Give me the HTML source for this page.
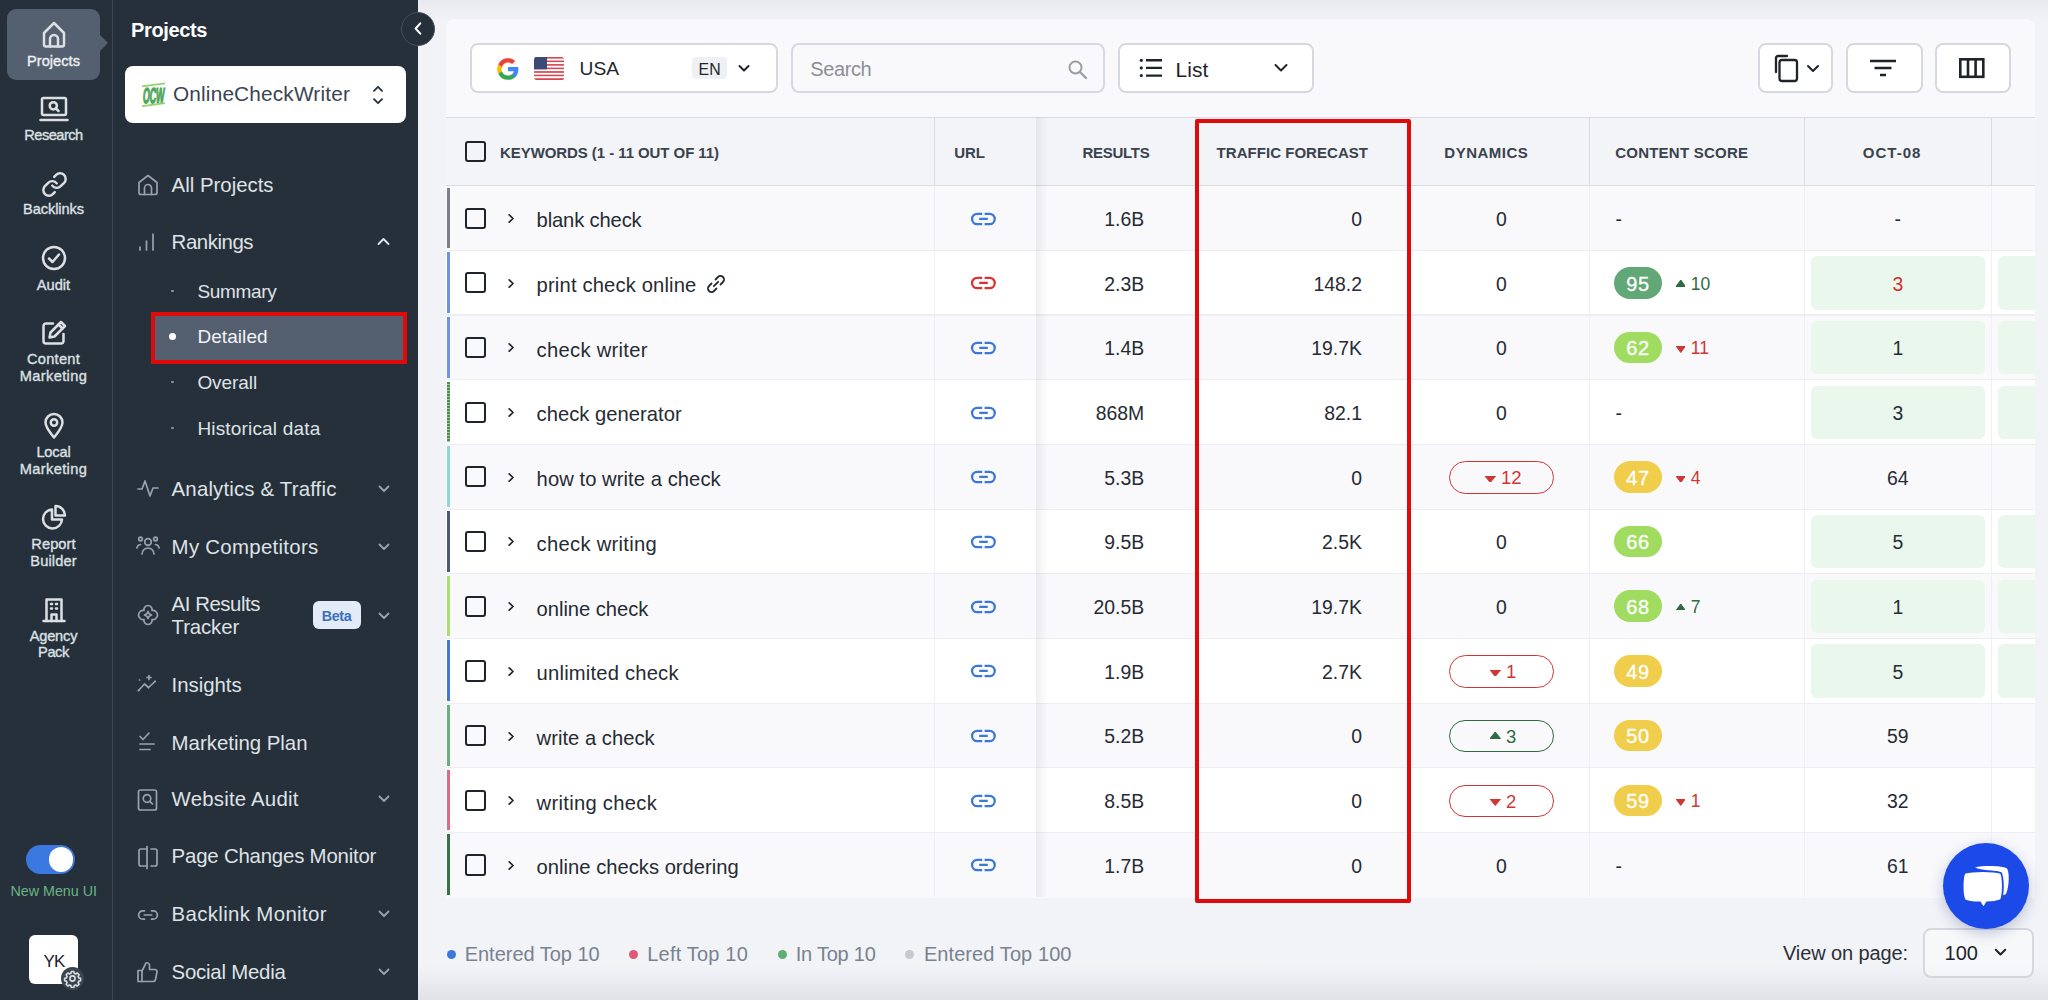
<!DOCTYPE html>
<html><head><meta charset="utf-8"><title>Rankings Detailed</title>
<style>
html,body{margin:0;padding:0;width:2048px;height:1000px;overflow:hidden;background:#f1f2f5;}
body{position:relative;font-family:"Liberation Sans",sans-serif;}
.a{position:absolute;display:block;}
.t{position:absolute;white-space:nowrap;line-height:1;}
</style></head><body>
<div class="a" style="left:418px;top:0px;width:1630px;height:1000px;background:#f2f3f7;"></div>
<div class="a" style="left:418px;top:0px;width:1630px;height:22px;background:linear-gradient(180deg,#e9eaef,rgba(242,243,247,0));"></div>
<div class="a" style="left:446px;top:18.5px;width:1589px;height:877.5px;background:#f9f9fc;border-radius:9px 9px 0 0;"></div>
<div class="a" style="left:470.3px;top:43px;width:307.3px;height:50px;background:#fff;border:2.5px solid #d6d8df;border-radius:8px;box-sizing:border-box;"></div>
<svg class="a" style="left:495.3px;top:55.5px;" width="26" height="26" viewBox="0 0 24 24" fill="none"><path d="M21.6 12.2c0-.7-.1-1.4-.2-2H12v3.9h5.4a4.6 4.6 0 0 1-2 3v2.5h3.2c1.9-1.7 3-4.3 3-7.4z" fill="#4285F4"/><path d="M12 22c2.7 0 5-.9 6.6-2.4l-3.2-2.5c-.9.6-2 1-3.4 1-2.6 0-4.8-1.8-5.6-4.1H3.1v2.6A10 10 0 0 0 12 22z" fill="#34A853"/><path d="M6.4 14a6 6 0 0 1 0-3.9V7.5H3.1a10 10 0 0 0 0 9z" fill="#FBBC05"/><path d="M12 5.9c1.5 0 2.8.5 3.8 1.5l2.9-2.9A10 10 0 0 0 3.1 7.5l3.3 2.6C7.2 7.7 9.4 5.9 12 5.9z" fill="#EA4335"/></svg>
<svg class="a" style="left:534px;top:56.6px;" width="30.3" height="23.2" viewBox="0 0 30.3 23.2" fill="none"><clipPath id="fc"><rect width="30.3" height="23.2" rx="3"/></clipPath><g clip-path="url(#fc)"><rect x="0" y="0.00" width="30" height="1.77" fill="#d8444f"/><rect x="0" y="1.77" width="30" height="1.77" fill="#ffffff"/><rect x="0" y="3.54" width="30" height="1.77" fill="#d8444f"/><rect x="0" y="5.31" width="30" height="1.77" fill="#ffffff"/><rect x="0" y="7.08" width="30" height="1.77" fill="#d8444f"/><rect x="0" y="8.85" width="30" height="1.77" fill="#ffffff"/><rect x="0" y="10.62" width="30" height="1.77" fill="#d8444f"/><rect x="0" y="12.38" width="30" height="1.77" fill="#ffffff"/><rect x="0" y="14.15" width="30" height="1.77" fill="#d8444f"/><rect x="0" y="15.92" width="30" height="1.77" fill="#ffffff"/><rect x="0" y="17.69" width="30" height="1.77" fill="#d8444f"/><rect x="0" y="19.46" width="30" height="1.77" fill="#ffffff"/><rect x="0" y="21.23" width="30" height="1.77" fill="#d8444f"/><rect x="0" y="0" width="13" height="12.4" fill="#3c4a78"/></g></svg>
<div class="t" style="left:579.60px;top:59.45px;font-size:19.2px;color:#1f242b;letter-spacing:-0.027px;">USA</div>
<div class="a" style="left:692.2px;top:57px;width:34.8px;height:22.3px;background:#eff0f4;border-radius:4px;"></div>
<div class="t" style="left:698.60px;top:62.13px;font-size:15.8px;color:#1f242b;letter-spacing:0.025px;">EN</div>
<svg class="a" style="left:736px;top:63px;" width="16" height="11" viewBox="0 0 16 11" fill="none"><path d="M3.5 3 L8 7.5 L12.5 3" stroke="#1f242b" stroke-width="2" stroke-linecap="round" stroke-linejoin="round"/></svg>
<div class="a" style="left:790.7px;top:43px;width:314.8px;height:50px;background:#f9f9fc;border:2.5px solid #d6d8df;border-radius:8px;box-sizing:border-box;"></div>
<div class="t" style="left:810.30px;top:59.47px;font-size:20px;color:#8b8f96;letter-spacing:-0.395px;">Search</div>
<svg class="a" style="left:1066px;top:58px;" width="24" height="24" viewBox="0 0 24 24" fill="none"><circle cx="9.5" cy="9.5" r="6" stroke="#9a9ea5" stroke-width="2"/><path d="M14 14 L20 20" stroke="#9a9ea5" stroke-width="2.4" stroke-linecap="round"/></svg>
<div class="a" style="left:1117.8px;top:43px;width:196.6px;height:50px;background:#fff;border:2.5px solid #d6d8df;border-radius:8px;box-sizing:border-box;"></div>
<svg class="a" style="left:1138px;top:57px;" width="27" height="22" viewBox="0 0 27 22" fill="none"><circle cx="3.3" cy="3.3" r="1.6" fill="#1f242b"/><circle cx="3.3" cy="10.9" r="1.6" fill="#1f242b"/><circle cx="3.3" cy="18.6" r="1.6" fill="#1f242b"/><path d="M8 3.3 H24 M8 10.9 H24 M8 18.6 H24" stroke="#1f242b" stroke-width="2.4"/></svg>
<div class="t" style="left:1175.50px;top:58.62px;font-size:21px;color:#1f242b;letter-spacing:0.080px;">List</div>
<svg class="a" style="left:1273px;top:63px;" width="16" height="11" viewBox="0 0 16 11" fill="none"><path d="M2.5 2 L8 7.5 L13.5 2" stroke="#1f242b" stroke-width="2" stroke-linecap="round" stroke-linejoin="round"/></svg>
<div class="a" style="left:1758.3px;top:42.8px;width:75.2px;height:50.4px;background:#fff;border:2.5px solid #d6d8df;border-radius:8px;box-sizing:border-box;"></div>
<div class="a" style="left:1846px;top:42.8px;width:76.7px;height:50.4px;background:#fff;border:2.5px solid #d6d8df;border-radius:8px;box-sizing:border-box;"></div>
<div class="a" style="left:1935px;top:42.8px;width:76.4px;height:50.4px;background:#fff;border:2.5px solid #d6d8df;border-radius:8px;box-sizing:border-box;"></div>
<svg class="a" style="left:1772px;top:53px;" width="50" height="32" viewBox="0 0 50 32" fill="none"><path d="M4 19 V5 a2 2 0 0 1 2 -2 H15" stroke="#1f242b" stroke-width="2.3" stroke-linecap="round"/><rect x="7.5" y="7" width="17.5" height="21" rx="2.5" stroke="#1f242b" stroke-width="2.3"/><path d="M36 13 L41 18 L46 13" stroke="#1f242b" stroke-width="2" stroke-linecap="round" stroke-linejoin="round"/></svg>
<svg class="a" style="left:1868px;top:56px;" width="30" height="24" viewBox="0 0 30 24" fill="none"><path d="M2 5 H28 M6.5 12 H23.5 M12 19 H18" stroke="#1f242b" stroke-width="2.6"/></svg>
<svg class="a" style="left:1957px;top:56px;" width="30" height="24" viewBox="0 0 30 24" fill="none"><rect x="3.3" y="3.3" width="23" height="17.5" stroke="#1f242b" stroke-width="2.6"/><path d="M11 3.3 V20.8 M18.6 3.3 V20.8" stroke="#1f242b" stroke-width="2.6"/></svg>
<div class="a" style="left:446px;top:117px;width:1589px;height:69px;background:#f3f4f8;border-top:1px solid #d9dbe2;border-bottom:1.5px solid #d9dbe2;box-sizing:border-box;"></div>
<div class="a" style="left:934.2px;top:118px;width:1px;height:67px;background:#d9dbe2;"></div>
<div class="a" style="left:1804.4px;top:118px;width:1px;height:67px;background:#d9dbe2;"></div>
<div class="a" style="left:1991.2px;top:118px;width:1px;height:67px;background:#d9dbe2;"></div>
<div class="a" style="left:1589.2px;top:118px;width:1px;height:67px;background:#d9dbe2;"></div>
<div class="a" style="left:464.8px;top:141px;width:21.2px;height:21.2px;border:2.6px solid #1f242b;border-radius:3px;box-sizing:border-box;"></div>
<div class="t" style="left:500.00px;top:145.30px;font-size:15px;color:#39424d;font-weight:700;letter-spacing:-0.070px;">KEYWORDS (1 - 11 OUT OF 11)</div>
<div class="t" style="left:954.20px;top:145.30px;font-size:15px;color:#39424d;font-weight:700;letter-spacing:-0.110px;">URL</div>
<div class="t" style="left:1082.40px;top:145.30px;font-size:15px;color:#39424d;font-weight:700;letter-spacing:-0.271px;">RESULTS</div>
<div class="t" style="left:1216.60px;top:145.30px;font-size:15px;color:#39424d;font-weight:700;letter-spacing:0.036px;">TRAFFIC FORECAST</div>
<div class="t" style="left:1444.30px;top:145.30px;font-size:15px;color:#39424d;font-weight:700;letter-spacing:0.499px;">DYNAMICS</div>
<div class="t" style="left:1615.20px;top:145.30px;font-size:15px;color:#39424d;font-weight:700;letter-spacing:0.230px;">CONTENT SCORE</div>
<div class="t" style="left:1862.70px;top:145.30px;font-size:15px;color:#39424d;font-weight:700;letter-spacing:1.047px;">OCT-08</div>
<div class="a" style="left:446px;top:185.5px;width:1589px;height:65.19px;background:#f9f9fc;"></div>
<div class="a" style="left:446.5px;top:187.5px;width:3px;height:60.69px;background:#7c8087;"></div>
<div class="a" style="left:464.8px;top:207.5px;width:21.2px;height:21.2px;border:2.6px solid #1f242b;border-radius:3px;box-sizing:border-box;"></div>
<svg class="a" style="left:506px;top:213.0px;" width="10" height="11" viewBox="0 0 10 11" fill="none"><path d="M3.2 1.8 L7 5.5 L3.2 9.2" stroke="#1f242b" stroke-width="1.7" stroke-linecap="round" stroke-linejoin="round"/></svg>
<div class="t" style="left:536.60px;top:210.40px;font-size:20.2px;color:#262b33;letter-spacing:-0.152px;">blank check</div>
<svg class="a" style="left:969.5px;top:211.5px;" width="27" height="14" viewBox="0 0 27 14" fill="none"><path d="M12.2 1.8 H7.2 a5.15 5.15 0 0 0 0 10.3 H12.2 M14.6 1.8 H19.6 a5.15 5.15 0 0 1 0 10.3 H14.6 M9.2 6.95 H17.8" stroke="#3a78d9" stroke-width="2.3" stroke-linecap="butt"/></svg>
<div class="t" style="left:1104.29px;top:209.88px;font-size:19.4px;color:#262b33;">1.6B</div>
<div class="t" style="left:1351.21px;top:209.88px;font-size:19.4px;color:#262b33;">0</div>
<div class="t" style="left:1495.91px;top:209.88px;font-size:19.4px;color:#262b33;">0</div>
<div class="t" style="left:1615.50px;top:209.88px;font-size:19.4px;color:#262b33;">-</div>
<div class="a" style="left:1804.4px;top:185.5px;width:1px;height:64.69px;background:#eef0f4;"></div>
<div class="a" style="left:1991.2px;top:185.5px;width:1px;height:64.69px;background:#eef0f4;"></div>
<div class="a" style="left:934.2px;top:185.5px;width:1px;height:64.69px;background:#eef0f4;"></div>
<div class="a" style="left:1589.2px;top:185.5px;width:1px;height:64.69px;background:#eef0f4;"></div>
<div class="t" style="left:1894.57px;top:209.88px;font-size:19.4px;color:#262b33;">-</div>
<div class="a" style="left:446px;top:250.19px;width:1589px;height:65.19px;background:#ffffff;"></div>
<div class="a" style="left:446.5px;top:252.19px;width:3px;height:60.69px;background:#6b95e0;"></div>
<div class="a" style="left:464.8px;top:272.19px;width:21.2px;height:21.2px;border:2.6px solid #1f242b;border-radius:3px;box-sizing:border-box;"></div>
<svg class="a" style="left:506px;top:277.69px;" width="10" height="11" viewBox="0 0 10 11" fill="none"><path d="M3.2 1.8 L7 5.5 L3.2 9.2" stroke="#1f242b" stroke-width="1.7" stroke-linecap="round" stroke-linejoin="round"/></svg>
<div class="t" style="left:536.60px;top:275.09px;font-size:20.2px;color:#262b33;letter-spacing:0.155px;">print check online</div>
<svg class="a" style="left:705px;top:273.39px;" width="22" height="22" viewBox="0 0 22 22" fill="none"><path d="M8.8 13.2 L13.2 8.8" stroke="#262b33" stroke-width="1.8" stroke-linecap="round"/><path d="M10.5 6.5 L13 4 a3.5 3.5 0 0 1 5 5 L15.5 11.5" stroke="#262b33" stroke-width="1.8" stroke-linecap="round"/><path d="M11.5 15.5 L9 18 a3.5 3.5 0 0 1 -5 -5 L6.5 10.5" stroke="#262b33" stroke-width="1.8" stroke-linecap="round"/></svg>
<svg class="a" style="left:969.5px;top:276.19px;" width="27" height="14" viewBox="0 0 27 14" fill="none"><path d="M12.2 1.8 H7.2 a5.15 5.15 0 0 0 0 10.3 H12.2 M14.6 1.8 H19.6 a5.15 5.15 0 0 1 0 10.3 H14.6 M9.2 6.95 H17.8" stroke="#e03131" stroke-width="2.3" stroke-linecap="butt"/></svg>
<div class="t" style="left:1104.29px;top:274.57px;font-size:19.4px;color:#262b33;">2.3B</div>
<div class="t" style="left:1313.45px;top:274.57px;font-size:19.4px;color:#262b33;">148.2</div>
<div class="t" style="left:1495.91px;top:274.57px;font-size:19.4px;color:#262b33;">0</div>
<div class="a" style="left:1614.2px;top:266.99px;width:47.5px;height:31.6px;background:#62a877;border-radius:16px;"></div>
<div class="t" style="left:1626.25px;top:273.66px;font-size:20px;color:#ffffff;letter-spacing:0.627px;-webkit-text-stroke:0.3px #fff;">95</div>
<svg class="a" style="left:1675.5px;top:280.19px;" width="9.5" height="6.5" viewBox="0 0 9.5 6.5" fill="none"><path d="M0 6.5 L4.75 0 L9.5 6.5 Z" fill="#2f6b40" stroke="#2f6b40" stroke-width="1" stroke-linejoin="round"/></svg>
<div class="t" style="left:1690.80px;top:275.58px;font-size:17.5px;color:#2f6b40;">10</div>
<div class="a" style="left:1804.4px;top:250.19px;width:1px;height:64.69px;background:#eef0f4;"></div>
<div class="a" style="left:1991.2px;top:250.19px;width:1px;height:64.69px;background:#eef0f4;"></div>
<div class="a" style="left:934.2px;top:250.19px;width:1px;height:64.69px;background:#eef0f4;"></div>
<div class="a" style="left:1589.2px;top:250.19px;width:1px;height:64.69px;background:#eef0f4;"></div>
<div class="a" style="left:1811px;top:256.29px;width:173.6px;height:53.3px;background:#e9f7ec;border-radius:6px;"></div>
<div class="a" style="left:1997.7px;top:256.29px;width:37.3px;height:53.3px;background:#e9f7ec;border-radius:6px 0 0 6px;"></div>
<div class="t" style="left:1892.41px;top:274.57px;font-size:19.4px;color:#d42f2f;">3</div>
<div class="a" style="left:446px;top:314.88px;width:1589px;height:65.19px;background:#f9f9fc;"></div>
<div class="a" style="left:446.5px;top:316.88px;width:3px;height:60.69px;background:#6b95e0;"></div>
<div class="a" style="left:464.8px;top:336.88px;width:21.2px;height:21.2px;border:2.6px solid #1f242b;border-radius:3px;box-sizing:border-box;"></div>
<svg class="a" style="left:506px;top:342.38px;" width="10" height="11" viewBox="0 0 10 11" fill="none"><path d="M3.2 1.8 L7 5.5 L3.2 9.2" stroke="#1f242b" stroke-width="1.7" stroke-linecap="round" stroke-linejoin="round"/></svg>
<div class="t" style="left:536.60px;top:339.78px;font-size:20.2px;color:#262b33;letter-spacing:0.287px;">check writer</div>
<svg class="a" style="left:969.5px;top:340.88px;" width="27" height="14" viewBox="0 0 27 14" fill="none"><path d="M12.2 1.8 H7.2 a5.15 5.15 0 0 0 0 10.3 H12.2 M14.6 1.8 H19.6 a5.15 5.15 0 0 1 0 10.3 H14.6 M9.2 6.95 H17.8" stroke="#3a78d9" stroke-width="2.3" stroke-linecap="butt"/></svg>
<div class="t" style="left:1104.29px;top:339.26px;font-size:19.4px;color:#262b33;">1.4B</div>
<div class="t" style="left:1311.30px;top:339.26px;font-size:19.4px;color:#262b33;">19.7K</div>
<div class="t" style="left:1495.91px;top:339.26px;font-size:19.4px;color:#262b33;">0</div>
<div class="a" style="left:1614.2px;top:331.68px;width:47.5px;height:31.6px;background:#9fdc60;border-radius:16px;"></div>
<div class="t" style="left:1626.25px;top:338.35px;font-size:20px;color:#ffffff;letter-spacing:0.627px;-webkit-text-stroke:0.3px #fff;">62</div>
<svg class="a" style="left:1675.5px;top:346.38px;" width="9.5" height="6.5" viewBox="0 0 9.5 6.5" fill="none"><path d="M0 0 L9.5 0 L4.75 6.5 Z" fill="#d13636" stroke="#d13636" stroke-width="1" stroke-linejoin="round"/></svg>
<div class="t" style="left:1690.80px;top:340.27px;font-size:17.5px;color:#d13636;">11</div>
<div class="a" style="left:1804.4px;top:314.88px;width:1px;height:64.69px;background:#eef0f4;"></div>
<div class="a" style="left:1991.2px;top:314.88px;width:1px;height:64.69px;background:#eef0f4;"></div>
<div class="a" style="left:934.2px;top:314.88px;width:1px;height:64.69px;background:#eef0f4;"></div>
<div class="a" style="left:1589.2px;top:314.88px;width:1px;height:64.69px;background:#eef0f4;"></div>
<div class="a" style="left:1811px;top:320.98px;width:173.6px;height:53.3px;background:#e9f7ec;border-radius:6px;"></div>
<div class="a" style="left:1997.7px;top:320.98px;width:37.3px;height:53.3px;background:#e9f7ec;border-radius:6px 0 0 6px;"></div>
<div class="t" style="left:1892.41px;top:339.26px;font-size:19.4px;color:#262b33;">1</div>
<div class="a" style="left:446px;top:379.57px;width:1589px;height:65.19px;background:#ffffff;"></div>
<div class="a" style="left:446.5px;top:381.57px;width:3px;height:60.69px;background:repeating-linear-gradient(180deg,#4a8f4f 0 2px,#9cc99e 2px 3px);"></div>
<div class="a" style="left:464.8px;top:401.57px;width:21.2px;height:21.2px;border:2.6px solid #1f242b;border-radius:3px;box-sizing:border-box;"></div>
<svg class="a" style="left:506px;top:407.07px;" width="10" height="11" viewBox="0 0 10 11" fill="none"><path d="M3.2 1.8 L7 5.5 L3.2 9.2" stroke="#1f242b" stroke-width="1.7" stroke-linecap="round" stroke-linejoin="round"/></svg>
<div class="t" style="left:536.60px;top:404.47px;font-size:20.2px;color:#262b33;letter-spacing:0.023px;">check generator</div>
<svg class="a" style="left:969.5px;top:405.57px;" width="27" height="14" viewBox="0 0 27 14" fill="none"><path d="M12.2 1.8 H7.2 a5.15 5.15 0 0 0 0 10.3 H12.2 M14.6 1.8 H19.6 a5.15 5.15 0 0 1 0 10.3 H14.6 M9.2 6.95 H17.8" stroke="#3a78d9" stroke-width="2.3" stroke-linecap="butt"/></svg>
<div class="t" style="left:1095.67px;top:403.95px;font-size:19.4px;color:#262b33;">868M</div>
<div class="t" style="left:1324.24px;top:403.95px;font-size:19.4px;color:#262b33;">82.1</div>
<div class="t" style="left:1495.91px;top:403.95px;font-size:19.4px;color:#262b33;">0</div>
<div class="t" style="left:1615.50px;top:403.95px;font-size:19.4px;color:#262b33;">-</div>
<div class="a" style="left:1804.4px;top:379.57px;width:1px;height:64.69px;background:#eef0f4;"></div>
<div class="a" style="left:1991.2px;top:379.57px;width:1px;height:64.69px;background:#eef0f4;"></div>
<div class="a" style="left:934.2px;top:379.57px;width:1px;height:64.69px;background:#eef0f4;"></div>
<div class="a" style="left:1589.2px;top:379.57px;width:1px;height:64.69px;background:#eef0f4;"></div>
<div class="a" style="left:1811px;top:385.67px;width:173.6px;height:53.3px;background:#e9f7ec;border-radius:6px;"></div>
<div class="a" style="left:1997.7px;top:385.67px;width:37.3px;height:53.3px;background:#e9f7ec;border-radius:6px 0 0 6px;"></div>
<div class="t" style="left:1892.41px;top:403.95px;font-size:19.4px;color:#262b33;">3</div>
<div class="a" style="left:446px;top:444.26px;width:1589px;height:65.19px;background:#f9f9fc;"></div>
<div class="a" style="left:446.5px;top:446.26px;width:3px;height:60.69px;background:#8fd6d6;"></div>
<div class="a" style="left:464.8px;top:466.26px;width:21.2px;height:21.2px;border:2.6px solid #1f242b;border-radius:3px;box-sizing:border-box;"></div>
<svg class="a" style="left:506px;top:471.76px;" width="10" height="11" viewBox="0 0 10 11" fill="none"><path d="M3.2 1.8 L7 5.5 L3.2 9.2" stroke="#1f242b" stroke-width="1.7" stroke-linecap="round" stroke-linejoin="round"/></svg>
<div class="t" style="left:536.60px;top:469.16px;font-size:20.2px;color:#262b33;letter-spacing:0.060px;">how to write a check</div>
<svg class="a" style="left:969.5px;top:470.26px;" width="27" height="14" viewBox="0 0 27 14" fill="none"><path d="M12.2 1.8 H7.2 a5.15 5.15 0 0 0 0 10.3 H12.2 M14.6 1.8 H19.6 a5.15 5.15 0 0 1 0 10.3 H14.6 M9.2 6.95 H17.8" stroke="#3a78d9" stroke-width="2.3" stroke-linecap="butt"/></svg>
<div class="t" style="left:1104.29px;top:468.64px;font-size:19.4px;color:#262b33;">5.3B</div>
<div class="t" style="left:1351.21px;top:468.64px;font-size:19.4px;color:#262b33;">0</div>
<div class="a" style="left:1449px;top:461.26px;width:104.7px;height:32.4px;border:1.6px solid #d13636;border-radius:17px;box-sizing:border-box;"></div>
<svg class="a" style="left:1485.2608203125px;top:475.76px;" width="10.5" height="6.5" viewBox="0 0 10.5 6.5" fill="none"><path d="M0 0 L10.5 0 L5.25 6.5 Z" fill="#d13636" stroke="#d13636" stroke-width="1" stroke-linejoin="round"/></svg>
<div class="t" style="left:1500.96px;top:469.40px;font-size:18.5px;color:#d13636;">12</div>
<div class="a" style="left:1614.2px;top:461.06px;width:47.5px;height:31.6px;background:#f0cd4a;border-radius:16px;"></div>
<div class="t" style="left:1626.25px;top:467.73px;font-size:20px;color:#ffffff;letter-spacing:0.627px;-webkit-text-stroke:0.3px #fff;">47</div>
<svg class="a" style="left:1675.5px;top:475.76px;" width="9.5" height="6.5" viewBox="0 0 9.5 6.5" fill="none"><path d="M0 0 L9.5 0 L4.75 6.5 Z" fill="#d13636" stroke="#d13636" stroke-width="1" stroke-linejoin="round"/></svg>
<div class="t" style="left:1690.80px;top:469.65px;font-size:17.5px;color:#d13636;">4</div>
<div class="a" style="left:1804.4px;top:444.26px;width:1px;height:64.69px;background:#eef0f4;"></div>
<div class="a" style="left:1991.2px;top:444.26px;width:1px;height:64.69px;background:#eef0f4;"></div>
<div class="a" style="left:934.2px;top:444.26px;width:1px;height:64.69px;background:#eef0f4;"></div>
<div class="a" style="left:1589.2px;top:444.26px;width:1px;height:64.69px;background:#eef0f4;"></div>
<div class="t" style="left:1887.01px;top:468.64px;font-size:19.4px;color:#262b33;">64</div>
<div class="a" style="left:446px;top:508.95px;width:1589px;height:65.19px;background:#ffffff;"></div>
<div class="a" style="left:446.5px;top:510.95px;width:3px;height:60.69px;background:#4c5a78;"></div>
<div class="a" style="left:464.8px;top:530.95px;width:21.2px;height:21.2px;border:2.6px solid #1f242b;border-radius:3px;box-sizing:border-box;"></div>
<svg class="a" style="left:506px;top:536.45px;" width="10" height="11" viewBox="0 0 10 11" fill="none"><path d="M3.2 1.8 L7 5.5 L3.2 9.2" stroke="#1f242b" stroke-width="1.7" stroke-linecap="round" stroke-linejoin="round"/></svg>
<div class="t" style="left:536.60px;top:533.85px;font-size:20.2px;color:#262b33;letter-spacing:0.288px;">check writing</div>
<svg class="a" style="left:969.5px;top:534.95px;" width="27" height="14" viewBox="0 0 27 14" fill="none"><path d="M12.2 1.8 H7.2 a5.15 5.15 0 0 0 0 10.3 H12.2 M14.6 1.8 H19.6 a5.15 5.15 0 0 1 0 10.3 H14.6 M9.2 6.95 H17.8" stroke="#3a78d9" stroke-width="2.3" stroke-linecap="butt"/></svg>
<div class="t" style="left:1104.29px;top:533.33px;font-size:19.4px;color:#262b33;">9.5B</div>
<div class="t" style="left:1322.09px;top:533.33px;font-size:19.4px;color:#262b33;">2.5K</div>
<div class="t" style="left:1495.91px;top:533.33px;font-size:19.4px;color:#262b33;">0</div>
<div class="a" style="left:1614.2px;top:525.75px;width:47.5px;height:31.6px;background:#9fdc60;border-radius:16px;"></div>
<div class="t" style="left:1626.25px;top:532.42px;font-size:20px;color:#ffffff;letter-spacing:0.627px;-webkit-text-stroke:0.3px #fff;">66</div>
<div class="a" style="left:1804.4px;top:508.95px;width:1px;height:64.69px;background:#eef0f4;"></div>
<div class="a" style="left:1991.2px;top:508.95px;width:1px;height:64.69px;background:#eef0f4;"></div>
<div class="a" style="left:934.2px;top:508.95px;width:1px;height:64.69px;background:#eef0f4;"></div>
<div class="a" style="left:1589.2px;top:508.95px;width:1px;height:64.69px;background:#eef0f4;"></div>
<div class="a" style="left:1811px;top:515.05px;width:173.6px;height:53.3px;background:#e9f7ec;border-radius:6px;"></div>
<div class="a" style="left:1997.7px;top:515.05px;width:37.3px;height:53.3px;background:#e9f7ec;border-radius:6px 0 0 6px;"></div>
<div class="t" style="left:1892.41px;top:533.33px;font-size:19.4px;color:#262b33;">5</div>
<div class="a" style="left:446px;top:573.64px;width:1589px;height:65.19px;background:#f9f9fc;"></div>
<div class="a" style="left:446.5px;top:575.64px;width:3px;height:60.69px;background:#a8e070;"></div>
<div class="a" style="left:464.8px;top:595.64px;width:21.2px;height:21.2px;border:2.6px solid #1f242b;border-radius:3px;box-sizing:border-box;"></div>
<svg class="a" style="left:506px;top:601.14px;" width="10" height="11" viewBox="0 0 10 11" fill="none"><path d="M3.2 1.8 L7 5.5 L3.2 9.2" stroke="#1f242b" stroke-width="1.7" stroke-linecap="round" stroke-linejoin="round"/></svg>
<div class="t" style="left:536.60px;top:598.54px;font-size:20.2px;color:#262b33;letter-spacing:-0.041px;">online check</div>
<svg class="a" style="left:969.5px;top:599.64px;" width="27" height="14" viewBox="0 0 27 14" fill="none"><path d="M12.2 1.8 H7.2 a5.15 5.15 0 0 0 0 10.3 H12.2 M14.6 1.8 H19.6 a5.15 5.15 0 0 1 0 10.3 H14.6 M9.2 6.95 H17.8" stroke="#3a78d9" stroke-width="2.3" stroke-linecap="butt"/></svg>
<div class="t" style="left:1093.50px;top:598.02px;font-size:19.4px;color:#262b33;">20.5B</div>
<div class="t" style="left:1311.30px;top:598.02px;font-size:19.4px;color:#262b33;">19.7K</div>
<div class="t" style="left:1495.91px;top:598.02px;font-size:19.4px;color:#262b33;">0</div>
<div class="a" style="left:1614.2px;top:590.4399999999999px;width:47.5px;height:31.6px;background:#9fdc60;border-radius:16px;"></div>
<div class="t" style="left:1626.25px;top:597.11px;font-size:20px;color:#ffffff;letter-spacing:0.627px;-webkit-text-stroke:0.3px #fff;">68</div>
<svg class="a" style="left:1675.5px;top:603.64px;" width="9.5" height="6.5" viewBox="0 0 9.5 6.5" fill="none"><path d="M0 6.5 L4.75 0 L9.5 6.5 Z" fill="#2f6b40" stroke="#2f6b40" stroke-width="1" stroke-linejoin="round"/></svg>
<div class="t" style="left:1690.80px;top:599.03px;font-size:17.5px;color:#2f6b40;">7</div>
<div class="a" style="left:1804.4px;top:573.64px;width:1px;height:64.69px;background:#eef0f4;"></div>
<div class="a" style="left:1991.2px;top:573.64px;width:1px;height:64.69px;background:#eef0f4;"></div>
<div class="a" style="left:934.2px;top:573.64px;width:1px;height:64.69px;background:#eef0f4;"></div>
<div class="a" style="left:1589.2px;top:573.64px;width:1px;height:64.69px;background:#eef0f4;"></div>
<div class="a" style="left:1811px;top:579.74px;width:173.6px;height:53.3px;background:#e9f7ec;border-radius:6px;"></div>
<div class="a" style="left:1997.7px;top:579.74px;width:37.3px;height:53.3px;background:#e9f7ec;border-radius:6px 0 0 6px;"></div>
<div class="t" style="left:1892.41px;top:598.02px;font-size:19.4px;color:#262b33;">1</div>
<div class="a" style="left:446px;top:638.33px;width:1589px;height:65.19px;background:#ffffff;"></div>
<div class="a" style="left:446.5px;top:640.33px;width:3px;height:60.69px;background:#3f78d8;"></div>
<div class="a" style="left:464.8px;top:660.3299999999999px;width:21.2px;height:21.2px;border:2.6px solid #1f242b;border-radius:3px;box-sizing:border-box;"></div>
<svg class="a" style="left:506px;top:665.8299999999999px;" width="10" height="11" viewBox="0 0 10 11" fill="none"><path d="M3.2 1.8 L7 5.5 L3.2 9.2" stroke="#1f242b" stroke-width="1.7" stroke-linecap="round" stroke-linejoin="round"/></svg>
<div class="t" style="left:536.60px;top:663.23px;font-size:20.2px;color:#262b33;letter-spacing:0.198px;">unlimited check</div>
<svg class="a" style="left:969.5px;top:664.3299999999999px;" width="27" height="14" viewBox="0 0 27 14" fill="none"><path d="M12.2 1.8 H7.2 a5.15 5.15 0 0 0 0 10.3 H12.2 M14.6 1.8 H19.6 a5.15 5.15 0 0 1 0 10.3 H14.6 M9.2 6.95 H17.8" stroke="#3a78d9" stroke-width="2.3" stroke-linecap="butt"/></svg>
<div class="t" style="left:1104.29px;top:662.71px;font-size:19.4px;color:#262b33;">1.9B</div>
<div class="t" style="left:1322.09px;top:662.71px;font-size:19.4px;color:#262b33;">2.7K</div>
<div class="a" style="left:1449px;top:655.3299999999999px;width:104.7px;height:32.4px;border:1.6px solid #d13636;border-radius:17px;box-sizing:border-box;"></div>
<svg class="a" style="left:1490.4054101562501px;top:669.8299999999999px;" width="10.5" height="6.5" viewBox="0 0 10.5 6.5" fill="none"><path d="M0 0 L10.5 0 L5.25 6.5 Z" fill="#d13636" stroke="#d13636" stroke-width="1" stroke-linejoin="round"/></svg>
<div class="t" style="left:1506.11px;top:663.47px;font-size:18.5px;color:#d13636;">1</div>
<div class="a" style="left:1614.2px;top:655.1299999999999px;width:47.5px;height:31.6px;background:#f0cd4a;border-radius:16px;"></div>
<div class="t" style="left:1626.25px;top:661.80px;font-size:20px;color:#ffffff;letter-spacing:0.627px;-webkit-text-stroke:0.3px #fff;">49</div>
<div class="a" style="left:1804.4px;top:638.3299999999999px;width:1px;height:64.69px;background:#eef0f4;"></div>
<div class="a" style="left:1991.2px;top:638.3299999999999px;width:1px;height:64.69px;background:#eef0f4;"></div>
<div class="a" style="left:934.2px;top:638.3299999999999px;width:1px;height:64.69px;background:#eef0f4;"></div>
<div class="a" style="left:1589.2px;top:638.3299999999999px;width:1px;height:64.69px;background:#eef0f4;"></div>
<div class="a" style="left:1811px;top:644.43px;width:173.6px;height:53.3px;background:#e9f7ec;border-radius:6px;"></div>
<div class="a" style="left:1997.7px;top:644.43px;width:37.3px;height:53.3px;background:#e9f7ec;border-radius:6px 0 0 6px;"></div>
<div class="t" style="left:1892.41px;top:662.71px;font-size:19.4px;color:#262b33;">5</div>
<div class="a" style="left:446px;top:703.02px;width:1589px;height:65.19px;background:#f9f9fc;"></div>
<div class="a" style="left:446.5px;top:705.02px;width:3px;height:60.69px;background:#6bb07a;"></div>
<div class="a" style="left:464.8px;top:725.02px;width:21.2px;height:21.2px;border:2.6px solid #1f242b;border-radius:3px;box-sizing:border-box;"></div>
<svg class="a" style="left:506px;top:730.52px;" width="10" height="11" viewBox="0 0 10 11" fill="none"><path d="M3.2 1.8 L7 5.5 L3.2 9.2" stroke="#1f242b" stroke-width="1.7" stroke-linecap="round" stroke-linejoin="round"/></svg>
<div class="t" style="left:536.60px;top:727.92px;font-size:20.2px;color:#262b33;letter-spacing:0.025px;">write a check</div>
<svg class="a" style="left:969.5px;top:729.02px;" width="27" height="14" viewBox="0 0 27 14" fill="none"><path d="M12.2 1.8 H7.2 a5.15 5.15 0 0 0 0 10.3 H12.2 M14.6 1.8 H19.6 a5.15 5.15 0 0 1 0 10.3 H14.6 M9.2 6.95 H17.8" stroke="#3a78d9" stroke-width="2.3" stroke-linecap="butt"/></svg>
<div class="t" style="left:1104.29px;top:727.40px;font-size:19.4px;color:#262b33;">5.2B</div>
<div class="t" style="left:1351.21px;top:727.40px;font-size:19.4px;color:#262b33;">0</div>
<div class="a" style="left:1449px;top:720.02px;width:104.7px;height:32.4px;border:1.6px solid #2f6b40;border-radius:17px;box-sizing:border-box;"></div>
<svg class="a" style="left:1490.4054101562501px;top:732.02px;" width="10.5" height="6.5" viewBox="0 0 10.5 6.5" fill="none"><path d="M0 6.5 L5.25 0 L10.5 6.5 Z" fill="#2f6b40" stroke="#2f6b40" stroke-width="1" stroke-linejoin="round"/></svg>
<div class="t" style="left:1506.11px;top:728.16px;font-size:18.5px;color:#2f6b40;">3</div>
<div class="a" style="left:1614.2px;top:719.8199999999999px;width:47.5px;height:31.6px;background:#f0cd4a;border-radius:16px;"></div>
<div class="t" style="left:1626.25px;top:726.49px;font-size:20px;color:#ffffff;letter-spacing:0.627px;-webkit-text-stroke:0.3px #fff;">50</div>
<div class="a" style="left:1804.4px;top:703.02px;width:1px;height:64.69px;background:#eef0f4;"></div>
<div class="a" style="left:1991.2px;top:703.02px;width:1px;height:64.69px;background:#eef0f4;"></div>
<div class="a" style="left:934.2px;top:703.02px;width:1px;height:64.69px;background:#eef0f4;"></div>
<div class="a" style="left:1589.2px;top:703.02px;width:1px;height:64.69px;background:#eef0f4;"></div>
<div class="t" style="left:1887.01px;top:727.40px;font-size:19.4px;color:#262b33;">59</div>
<div class="a" style="left:446px;top:767.71px;width:1589px;height:65.19px;background:#ffffff;"></div>
<div class="a" style="left:446.5px;top:769.71px;width:3px;height:60.69px;background:#e06880;"></div>
<div class="a" style="left:464.8px;top:789.71px;width:21.2px;height:21.2px;border:2.6px solid #1f242b;border-radius:3px;box-sizing:border-box;"></div>
<svg class="a" style="left:506px;top:795.21px;" width="10" height="11" viewBox="0 0 10 11" fill="none"><path d="M3.2 1.8 L7 5.5 L3.2 9.2" stroke="#1f242b" stroke-width="1.7" stroke-linecap="round" stroke-linejoin="round"/></svg>
<div class="t" style="left:536.60px;top:792.61px;font-size:20.2px;color:#262b33;letter-spacing:0.288px;">writing check</div>
<svg class="a" style="left:969.5px;top:793.71px;" width="27" height="14" viewBox="0 0 27 14" fill="none"><path d="M12.2 1.8 H7.2 a5.15 5.15 0 0 0 0 10.3 H12.2 M14.6 1.8 H19.6 a5.15 5.15 0 0 1 0 10.3 H14.6 M9.2 6.95 H17.8" stroke="#3a78d9" stroke-width="2.3" stroke-linecap="butt"/></svg>
<div class="t" style="left:1104.29px;top:792.09px;font-size:19.4px;color:#262b33;">8.5B</div>
<div class="t" style="left:1351.21px;top:792.09px;font-size:19.4px;color:#262b33;">0</div>
<div class="a" style="left:1449px;top:784.71px;width:104.7px;height:32.4px;border:1.6px solid #d13636;border-radius:17px;box-sizing:border-box;"></div>
<svg class="a" style="left:1490.4054101562501px;top:799.21px;" width="10.5" height="6.5" viewBox="0 0 10.5 6.5" fill="none"><path d="M0 0 L10.5 0 L5.25 6.5 Z" fill="#d13636" stroke="#d13636" stroke-width="1" stroke-linejoin="round"/></svg>
<div class="t" style="left:1506.11px;top:792.85px;font-size:18.5px;color:#d13636;">2</div>
<div class="a" style="left:1614.2px;top:784.51px;width:47.5px;height:31.6px;background:#f0cd4a;border-radius:16px;"></div>
<div class="t" style="left:1626.25px;top:791.18px;font-size:20px;color:#ffffff;letter-spacing:0.627px;-webkit-text-stroke:0.3px #fff;">59</div>
<svg class="a" style="left:1675.5px;top:799.21px;" width="9.5" height="6.5" viewBox="0 0 9.5 6.5" fill="none"><path d="M0 0 L9.5 0 L4.75 6.5 Z" fill="#d13636" stroke="#d13636" stroke-width="1" stroke-linejoin="round"/></svg>
<div class="t" style="left:1690.80px;top:793.10px;font-size:17.5px;color:#d13636;">1</div>
<div class="a" style="left:1804.4px;top:767.71px;width:1px;height:64.69px;background:#eef0f4;"></div>
<div class="a" style="left:1991.2px;top:767.71px;width:1px;height:64.69px;background:#eef0f4;"></div>
<div class="a" style="left:934.2px;top:767.71px;width:1px;height:64.69px;background:#eef0f4;"></div>
<div class="a" style="left:1589.2px;top:767.71px;width:1px;height:64.69px;background:#eef0f4;"></div>
<div class="t" style="left:1887.01px;top:792.09px;font-size:19.4px;color:#262b33;">32</div>
<div class="a" style="left:446px;top:832.4px;width:1589px;height:65.19px;background:#f9f9fc;"></div>
<div class="a" style="left:446.5px;top:834.4px;width:3px;height:60.69px;background:#3a7048;"></div>
<div class="a" style="left:464.8px;top:854.4px;width:21.2px;height:21.2px;border:2.6px solid #1f242b;border-radius:3px;box-sizing:border-box;"></div>
<svg class="a" style="left:506px;top:859.9px;" width="10" height="11" viewBox="0 0 10 11" fill="none"><path d="M3.2 1.8 L7 5.5 L3.2 9.2" stroke="#1f242b" stroke-width="1.7" stroke-linecap="round" stroke-linejoin="round"/></svg>
<div class="t" style="left:536.60px;top:857.30px;font-size:20.2px;color:#262b33;letter-spacing:0.008px;">online checks ordering</div>
<svg class="a" style="left:969.5px;top:858.4px;" width="27" height="14" viewBox="0 0 27 14" fill="none"><path d="M12.2 1.8 H7.2 a5.15 5.15 0 0 0 0 10.3 H12.2 M14.6 1.8 H19.6 a5.15 5.15 0 0 1 0 10.3 H14.6 M9.2 6.95 H17.8" stroke="#3a78d9" stroke-width="2.3" stroke-linecap="butt"/></svg>
<div class="t" style="left:1104.29px;top:856.78px;font-size:19.4px;color:#262b33;">1.7B</div>
<div class="t" style="left:1351.21px;top:856.78px;font-size:19.4px;color:#262b33;">0</div>
<div class="t" style="left:1495.91px;top:856.78px;font-size:19.4px;color:#262b33;">0</div>
<div class="t" style="left:1615.50px;top:856.78px;font-size:19.4px;color:#262b33;">-</div>
<div class="a" style="left:1804.4px;top:832.4px;width:1px;height:64.69px;background:#eef0f4;"></div>
<div class="a" style="left:1991.2px;top:832.4px;width:1px;height:64.69px;background:#eef0f4;"></div>
<div class="a" style="left:934.2px;top:832.4px;width:1px;height:64.69px;background:#eef0f4;"></div>
<div class="a" style="left:1589.2px;top:832.4px;width:1px;height:64.69px;background:#eef0f4;"></div>
<div class="t" style="left:1887.01px;top:856.78px;font-size:19.4px;color:#262b33;">61</div>
<div class="a" style="left:446px;top:249.79px;width:1589px;height:1.2px;background:#eceef3;"></div>
<div class="a" style="left:446px;top:314.48px;width:1589px;height:1.2px;background:#eceef3;"></div>
<div class="a" style="left:446px;top:379.17px;width:1589px;height:1.2px;background:#eceef3;"></div>
<div class="a" style="left:446px;top:443.86px;width:1589px;height:1.2px;background:#eceef3;"></div>
<div class="a" style="left:446px;top:508.55px;width:1589px;height:1.2px;background:#eceef3;"></div>
<div class="a" style="left:446px;top:573.24px;width:1589px;height:1.2px;background:#eceef3;"></div>
<div class="a" style="left:446px;top:637.93px;width:1589px;height:1.2px;background:#eceef3;"></div>
<div class="a" style="left:446px;top:702.62px;width:1589px;height:1.2px;background:#eceef3;"></div>
<div class="a" style="left:446px;top:767.31px;width:1589px;height:1.2px;background:#eceef3;"></div>
<div class="a" style="left:446px;top:832.0px;width:1589px;height:1.2px;background:#eceef3;"></div>
<div class="a" style="left:1036px;top:117px;width:12px;height:780px;background:linear-gradient(90deg,rgba(30,40,60,0.07),rgba(30,40,60,0));"></div>
<div class="a" style="left:1194.5px;top:118.5px;width:216.5px;height:784.5px;border:4px solid #e00a0a;box-sizing:border-box;border-radius:2px;"></div>
<div class="a" style="left:446.8px;top:949.7px;width:9px;height:9px;background:#3a78d9;border-radius:50%;"></div>
<div class="t" style="left:464.70px;top:943.67px;font-size:20px;color:#788290;letter-spacing:-0.021px;">Entered Top 10</div>
<div class="a" style="left:629px;top:949.7px;width:9px;height:9px;background:#e05a78;border-radius:50%;"></div>
<div class="t" style="left:647.30px;top:943.67px;font-size:20px;color:#788290;letter-spacing:0.190px;">Left Top 10</div>
<div class="a" style="left:778px;top:949.7px;width:9px;height:9px;background:#5fae74;border-radius:50%;"></div>
<div class="t" style="left:795.70px;top:943.67px;font-size:20px;color:#788290;letter-spacing:-0.214px;">In Top 10</div>
<div class="a" style="left:905.4px;top:949.7px;width:9px;height:9px;background:#c8c9cc;border-radius:50%;"></div>
<div class="t" style="left:923.90px;top:943.67px;font-size:20px;color:#788290;letter-spacing:0.085px;">Entered Top 100</div>
<div class="t" style="left:1783.00px;top:943.47px;font-size:20px;color:#2b3038;letter-spacing:-0.108px;">View on page:</div>
<div class="a" style="left:1923px;top:928px;width:111px;height:50.4px;background:#f7f8fa;border:2.5px solid #d6d8df;border-radius:8px;box-sizing:border-box;"></div>
<div class="t" style="left:1944.60px;top:943.47px;font-size:20px;color:#1f242b;letter-spacing:-0.057px;">100</div>
<svg class="a" style="left:1993px;top:948px;" width="15" height="11" viewBox="0 0 15 11" fill="none"><path d="M2.8 1.8 L7.5 6.5 L12.2 1.8" stroke="#1f242b" stroke-width="2" stroke-linecap="round" stroke-linejoin="round"/></svg>
<div class="a" style="left:418px;top:966px;width:1630px;height:34px;background:linear-gradient(180deg,rgba(200,203,212,0),rgba(200,203,212,0.42));"></div>
<div class="a" style="left:1943.2px;top:843.4px;width:86px;height:86px;background:#1b4ae8;border-radius:50%;box-shadow:0 4px 14px rgba(20,40,120,0.25);"></div>
<svg class="a" style="left:1960px;top:860px;" width="50" height="52" viewBox="0 0 50 52" fill="none"><path d="M15 7.5 C 23 5.5 41 5.5 47 8.5 C 49.5 12 49.5 26 46 34 C 45 35 43 35 42 35 C 43 26 43 16 41 12.5 C 35 10.5 21 10.5 15 7.5 Z" fill="#fff"/><path d="M4.5 13 C 13 10.5 33 10.5 41 13 C 43.5 18.5 43.5 34 41 40 C 36 42 30 42.5 27 42.5 L23.5 48 L20 42.5 C 16 42.5 7.5 42 4.5 40 C 2 34 2 18.5 4.5 13 Z" fill="#fff" stroke="#1b4ae8" stroke-width="1.8"/></svg>
<div class="a" style="left:0px;top:0px;width:112px;height:1000px;background:#26303a;"></div>
<div class="a" style="left:112px;top:0px;width:1.7px;height:1000px;background:#3c4554;"></div>
<div class="a" style="left:7px;top:8.5px;width:93px;height:71.5px;background:#546070;border-radius:9px;"></div>
<svg class="a" style="left:99px;top:34px;" width="10" height="18" viewBox="0 0 10 18" fill="none"><path d="M0 0 L9 9 L0 18 Z" fill="#546070"/></svg>
<svg class="a" style="left:40px;top:20px;" width="28" height="30" viewBox="0 0 28 30" fill="none"><path d="M4 13 L14 3 L24 13 V24.5 a2 2 0 0 1 -2 2 H6 a2 2 0 0 1 -2 -2 Z" stroke="#dcdfe3" stroke-width="2.5" stroke-linecap="round" stroke-linejoin="round"/><path d="M10 26.5 V19 a4 4 0 0 1 8 0 V26.5" stroke="#dcdfe3" stroke-width="2.5" stroke-linecap="round" stroke-linejoin="round"/></svg>
<div class="t" style="left:27.00px;top:53.64px;font-size:14.6px;color:#eef0f2;letter-spacing:0.032px;-webkit-text-stroke:0.35px currentColor;">Projects</div>
<svg class="a" style="left:38px;top:96px;" width="32" height="27" viewBox="0 0 32 27" fill="none"><rect x="4" y="2" width="24" height="17" rx="1.5" stroke="#dcdfe3" stroke-width="2.5" stroke-linecap="round" stroke-linejoin="round"/><path d="M2.5 24 H29.5" stroke="#dcdfe3" stroke-width="2.5" stroke-linecap="round" stroke-linejoin="round"/><circle cx="15.3" cy="9.8" r="3.6" stroke="#dcdfe3" stroke-width="2.5" stroke-linecap="round" stroke-linejoin="round"/><path d="M18 12.5 L20.5 15" stroke="#dcdfe3" stroke-width="2.5" stroke-linecap="round" stroke-linejoin="round"/></svg>
<div class="t" style="left:24.25px;top:128.14px;font-size:14.6px;color:#dde0e4;letter-spacing:-0.498px;-webkit-text-stroke:0.35px currentColor;">Research</div>
<svg class="a" style="left:40.5px;top:170.5px;" width="27" height="27" viewBox="0 0 24 24" fill="none"><path d="M10 13a5 5 0 0 0 7.54.54l3-3a5 5 0 0 0-7.07-7.07l-1.72 1.71" stroke="#dcdfe3" stroke-width="2.2" stroke-linecap="round" stroke-linejoin="round"/><path d="M14 11a5 5 0 0 0-7.54-.54l-3 3a5 5 0 0 0 7.07 7.07l1.71-1.71" stroke="#dcdfe3" stroke-width="2.2" stroke-linecap="round" stroke-linejoin="round"/></svg>
<div class="t" style="left:23.00px;top:202.24px;font-size:14.6px;color:#dde0e4;letter-spacing:-0.074px;-webkit-text-stroke:0.35px currentColor;">Backlinks</div>
<svg class="a" style="left:40px;top:244px;" width="28" height="28" viewBox="0 0 28 28" fill="none"><circle cx="14" cy="14" r="11" stroke="#dcdfe3" stroke-width="2.5" stroke-linecap="round" stroke-linejoin="round"/><path d="M9 14.5 L12.5 18 L19 10.5" stroke="#dcdfe3" stroke-width="2.5" stroke-linecap="round" stroke-linejoin="round"/></svg>
<div class="t" style="left:36.86px;top:277.64px;font-size:14.6px;color:#dde0e4;-webkit-text-stroke:0.35px currentColor;">Audit</div>
<svg class="a" style="left:40px;top:319px;" width="28" height="28" viewBox="0 0 28 28" fill="none"><path d="M13 4.5 H6 a2.5 2.5 0 0 0 -2.5 2.5 V22 a2.5 2.5 0 0 0 2.5 2.5 H21 a2.5 2.5 0 0 0 2.5 -2.5 V15" stroke="#dcdfe3" stroke-width="2.5" stroke-linecap="round" stroke-linejoin="round"/><path d="M21 3 L25 7 L14.5 17.5 L9.5 18.5 L10.5 13.5 Z" stroke="#dcdfe3" stroke-width="2.5" stroke-linecap="round" stroke-linejoin="round"/><path d="M18.5 5.5 L22.5 9.5" stroke="#dcdfe3" stroke-width="2.5" stroke-linecap="round" stroke-linejoin="round"/></svg>
<div class="t" style="left:26.90px;top:352.24px;font-size:14.6px;color:#dde0e4;letter-spacing:0.295px;-webkit-text-stroke:0.35px currentColor;">Content</div>
<div class="t" style="left:19.85px;top:369.34px;font-size:14.6px;color:#dde0e4;letter-spacing:0.355px;-webkit-text-stroke:0.35px currentColor;">Marketing</div>
<svg class="a" style="left:40px;top:412px;" width="28" height="28" viewBox="0 0 28 28" fill="none"><path d="M14 25.5 C 9 19.5 5.5 15 5.5 10.5 a8.5 8.5 0 0 1 17 0 C 22.5 15 19 19.5 14 25.5 Z" stroke="#dcdfe3" stroke-width="2.5" stroke-linecap="round" stroke-linejoin="round"/><circle cx="14" cy="10.5" r="3.2" stroke="#dcdfe3" stroke-width="2.5" stroke-linecap="round" stroke-linejoin="round"/></svg>
<div class="t" style="left:36.40px;top:444.64px;font-size:14.6px;color:#dde0e4;letter-spacing:-0.141px;-webkit-text-stroke:0.35px currentColor;">Local</div>
<div class="t" style="left:19.85px;top:461.64px;font-size:14.6px;color:#dde0e4;letter-spacing:0.355px;-webkit-text-stroke:0.35px currentColor;">Marketing</div>
<svg class="a" style="left:40px;top:503px;" width="28" height="28" viewBox="0 0 28 28" fill="none"><path d="M12 6.5 a9.5 9.5 0 1 0 10 10 H12 Z" stroke="#dcdfe3" stroke-width="2.5" stroke-linecap="round" stroke-linejoin="round"/><path d="M15.5 3 a9.5 9.5 0 0 1 9.5 9.5 H15.5 Z" stroke="#dcdfe3" stroke-width="2.5" stroke-linecap="round" stroke-linejoin="round"/></svg>
<div class="t" style="left:31.25px;top:536.64px;font-size:14.6px;color:#dde0e4;letter-spacing:0.113px;-webkit-text-stroke:0.35px currentColor;">Report</div>
<div class="t" style="left:30.30px;top:553.64px;font-size:14.6px;color:#dde0e4;letter-spacing:0.136px;-webkit-text-stroke:0.35px currentColor;">Builder</div>
<svg class="a" style="left:40px;top:596px;" width="28" height="28" viewBox="0 0 28 28" fill="none"><path d="M6.5 25 V3.5 H21.5 V25" stroke="#dcdfe3" stroke-width="2.5" stroke-linecap="round" stroke-linejoin="round"/><path d="M3.5 25 H24.5" stroke="#dcdfe3" stroke-width="2.5" stroke-linecap="round" stroke-linejoin="round"/><path d="M11 8 h1 M16 8 h1 M11 12.5 h1 M16 12.5 h1" stroke="#dcdfe3" stroke-width="2.5" stroke-linecap="round" stroke-linejoin="round"/><path d="M11.5 25 V18.5 H16.5 V25" stroke="#dcdfe3" stroke-width="2.5" stroke-linecap="round" stroke-linejoin="round"/></svg>
<div class="t" style="left:29.75px;top:628.64px;font-size:14.6px;color:#dde0e4;letter-spacing:-0.200px;-webkit-text-stroke:0.35px currentColor;">Agency</div>
<div class="t" style="left:38.10px;top:644.64px;font-size:14.6px;color:#dde0e4;letter-spacing:-0.415px;-webkit-text-stroke:0.35px currentColor;">Pack</div>
<div class="a" style="left:25.75px;top:844.5px;width:48.75px;height:29.25px;background:#3b78e0;border-radius:15px;"></div>
<div class="a" style="left:48.5px;top:847px;width:24.5px;height:24.5px;background:#fff;border-radius:50%;"></div>
<div class="t" style="left:10.50px;top:883.90px;font-size:14.3px;color:#6bb383;letter-spacing:-0.011px;">New Menu UI</div>
<div class="a" style="left:29.25px;top:935px;width:49px;height:49px;background:#fff;border-radius:6px;"></div>
<div class="t" style="left:43.50px;top:952.61px;font-size:17px;color:#1d2129;letter-spacing:-0.840px;">YK</div>
<div class="a" style="left:61px;top:966.5px;width:23px;height:23px;background:#3a4350;border-radius:50%;"></div>
<svg class="a" style="left:63px;top:968.5px;" width="19" height="19" viewBox="0 0 19 19" fill="none"><circle cx="9.5" cy="9.5" r="2.6" stroke="#dcdfe3" stroke-width="1.6" stroke-linecap="round" stroke-linejoin="round"/><path d="M9.5 2.5 l1.3 0 .4 1.8 1.5 .7 1.6 -1 1.8 1.8 -1 1.6 .7 1.5 1.8 .4 0 2.4 -1.8 .4 -.7 1.5 1 1.6 -1.8 1.8 -1.6 -1 -1.5 .7 -.4 1.8 -2.4 0 -.4 -1.8 -1.5 -.7 -1.6 1 -1.8 -1.8 1 -1.6 -.7 -1.5 -1.8 -.4 0 -2.4 1.8 -.4 .7 -1.5 -1 -1.6 1.8 -1.8 1.6 1 1.5 -.7 .4 -1.8 Z" stroke="#dcdfe3" stroke-width="1.6" stroke-linecap="round" stroke-linejoin="round"/></svg>
<div class="a" style="left:113px;top:0px;width:305px;height:1000px;background:#26303a;"></div>
<div class="t" style="left:131.00px;top:20.07px;font-size:20px;color:#ffffff;font-weight:700;letter-spacing:-0.366px;">Projects</div>
<div class="a" style="left:125px;top:66px;width:281px;height:57px;background:#fff;border-radius:8px;"></div>
<svg class="a" style="left:141px;top:82px;" width="25" height="25" viewBox="0 0 25 25" fill="none"><g transform="translate(1.5,21.3) scale(0.47,1.13) skewX(-10)"><text x="0" y="0" font-family="Liberation Sans" font-weight="700" font-size="19" fill="#50a65a" stroke="#50a65a" stroke-width="1.2" letter-spacing="-0.5">OCW</text></g><path d="M1 4.3 L24 1.3 M1 24.2 L24 21.2" stroke="#92d46e" stroke-width="1.8"/></svg>
<div class="t" style="left:173.00px;top:83.89px;font-size:20.8px;color:#3a4453;letter-spacing:0.167px;">OnlineCheckWriter</div>
<svg class="a" style="left:371px;top:84px;" width="14" height="22" viewBox="0 0 14 22" fill="none"><path d="M3 6.8 L7 2.8 L11 6.8 M3 15.2 L7 19.2 L11 15.2" stroke="#2b3340" stroke-width="1.9" stroke-linecap="round" stroke-linejoin="round"/></svg>
<svg class="a" style="left:136px;top:174px;" width="24" height="22" viewBox="0 0 24 22" fill="none"><path d="M3 8.5 L12 1.5 L21 8.5 V18.5 a2 2 0 0 1 -2 2 H5 a2 2 0 0 1 -2 -2 Z" stroke="#9aa1aa" stroke-width="1.7" stroke-linecap="round" stroke-linejoin="round"/><path d="M8.5 20.5 V14 a3.5 3.5 0 0 1 7 0 V20.5" stroke="#9aa1aa" stroke-width="1.7" stroke-linecap="round" stroke-linejoin="round"/></svg>
<div class="t" style="left:171.60px;top:174.73px;font-size:20.4px;color:#dfe2e6;letter-spacing:-0.003px;">All Projects</div>
<svg class="a" style="left:136px;top:231px;" width="24" height="22" viewBox="0 0 24 22" fill="none"><path d="M4 19 V16 M10.5 19 V10 M17 19 V3" stroke="#9aa1aa" stroke-width="1.7" stroke-linecap="round" stroke-linejoin="round"/></svg>
<div class="t" style="left:171.60px;top:232.13px;font-size:20.4px;color:#dfe2e6;letter-spacing:-0.444px;">Rankings</div>
<svg class="a" style="left:377px;top:237px;" width="13" height="9" viewBox="0 0 13 9" fill="none"><path d="M1.5 7 L6.5 2 L11.5 7" stroke="#dfe2e6" stroke-width="1.9" stroke-linecap="round" stroke-linejoin="round"/></svg>
<div class="a" style="left:171.2px;top:289.5px;width:2.4px;height:2.4px;background:#8d949c;border-radius:50%;"></div>
<div class="t" style="left:197.40px;top:281.92px;font-size:19px;color:#dfe2e6;letter-spacing:-0.327px;">Summary</div>
<div class="a" style="left:171.2px;top:381.0px;width:2.4px;height:2.4px;background:#8d949c;border-radius:50%;"></div>
<div class="t" style="left:197.40px;top:373.42px;font-size:19px;color:#dfe2e6;letter-spacing:-0.055px;">Overall</div>
<div class="a" style="left:171.2px;top:427.0px;width:2.4px;height:2.4px;background:#8d949c;border-radius:50%;"></div>
<div class="t" style="left:197.40px;top:419.42px;font-size:19px;color:#dfe2e6;letter-spacing:0.174px;">Historical data</div>
<div class="a" style="left:151px;top:311.5px;width:256px;height:52.5px;border:4px solid #e00a0a;box-sizing:border-box;"></div>
<div class="a" style="left:155px;top:315.5px;width:248px;height:44.5px;background:#546070;"></div>
<div class="a" style="left:168.7px;top:332.5px;width:7px;height:7px;background:#ffffff;border-radius:50%;"></div>
<div class="t" style="left:197.40px;top:326.92px;font-size:19px;color:#f2f4f6;letter-spacing:0.073px;">Detailed</div>
<div class="t" style="left:171.60px;top:479.33px;font-size:20.4px;color:#dfe2e6;letter-spacing:0.171px;">Analytics &amp; Traffic</div>
<svg class="a" style="left:378px;top:485.3px;" width="12" height="8" viewBox="0 0 12 8" fill="none"><path d="M1.5 1.5 L6 6 L10.5 1.5" stroke="#9aa1aa" stroke-width="1.8" stroke-linecap="round" stroke-linejoin="round"/></svg>
<div class="t" style="left:171.60px;top:537.23px;font-size:20.4px;color:#dfe2e6;letter-spacing:0.298px;">My Competitors</div>
<svg class="a" style="left:378px;top:543.2px;" width="12" height="8" viewBox="0 0 12 8" fill="none"><path d="M1.5 1.5 L6 6 L10.5 1.5" stroke="#9aa1aa" stroke-width="1.8" stroke-linecap="round" stroke-linejoin="round"/></svg>
<div class="t" style="left:171.60px;top:674.53px;font-size:20.4px;color:#dfe2e6;letter-spacing:-0.038px;">Insights</div>
<div class="t" style="left:171.60px;top:732.53px;font-size:20.4px;color:#dfe2e6;letter-spacing:-0.005px;">Marketing Plan</div>
<div class="t" style="left:171.60px;top:788.73px;font-size:20.4px;color:#dfe2e6;letter-spacing:0.203px;">Website Audit</div>
<svg class="a" style="left:378px;top:794.7px;" width="12" height="8" viewBox="0 0 12 8" fill="none"><path d="M1.5 1.5 L6 6 L10.5 1.5" stroke="#9aa1aa" stroke-width="1.8" stroke-linecap="round" stroke-linejoin="round"/></svg>
<div class="t" style="left:171.60px;top:846.43px;font-size:20.4px;color:#dfe2e6;letter-spacing:-0.198px;">Page Changes Monitor</div>
<div class="t" style="left:171.60px;top:904.03px;font-size:20.4px;color:#dfe2e6;letter-spacing:0.353px;">Backlink Monitor</div>
<svg class="a" style="left:378px;top:910.0px;" width="12" height="8" viewBox="0 0 12 8" fill="none"><path d="M1.5 1.5 L6 6 L10.5 1.5" stroke="#9aa1aa" stroke-width="1.8" stroke-linecap="round" stroke-linejoin="round"/></svg>
<div class="t" style="left:171.60px;top:961.63px;font-size:20.4px;color:#dfe2e6;letter-spacing:-0.233px;">Social Media</div>
<svg class="a" style="left:378px;top:967.6px;" width="12" height="8" viewBox="0 0 12 8" fill="none"><path d="M1.5 1.5 L6 6 L10.5 1.5" stroke="#9aa1aa" stroke-width="1.8" stroke-linecap="round" stroke-linejoin="round"/></svg>
<div class="t" style="left:171.60px;top:594.23px;font-size:20.4px;color:#dfe2e6;letter-spacing:-0.457px;">AI Results</div>
<div class="t" style="left:171.60px;top:616.73px;font-size:20.4px;color:#dfe2e6;letter-spacing:-0.126px;">Tracker</div>
<div class="a" style="left:313px;top:600.5px;width:47.8px;height:28.5px;background:#e3ebf7;border-radius:6px;"></div>
<div class="t" style="left:321.85px;top:609.20px;font-size:14.3px;color:#3a6fbf;font-weight:700;letter-spacing:-0.374px;">Beta</div>
<svg class="a" style="left:378px;top:611.5px;" width="12" height="8" viewBox="0 0 12 8" fill="none"><path d="M1.5 1.5 L6 6 L10.5 1.5" stroke="#9aa1aa" stroke-width="1.8" stroke-linecap="round" stroke-linejoin="round"/></svg>
<svg class="a" style="left:136px;top:477px;" width="24" height="22" viewBox="0 0 24 22" fill="none"><path d="M2 12 H6 L9 4 L14 19 L17 11 H22" stroke="#9aa1aa" stroke-width="1.7" stroke-linecap="round" stroke-linejoin="round"/></svg>
<svg class="a" style="left:135px;top:534px;" width="26" height="24" viewBox="0 0 26 24" fill="none"><circle cx="13" cy="8" r="3.3" stroke="#9aa1aa" stroke-width="1.7" stroke-linecap="round" stroke-linejoin="round"/><path d="M7 20 a6 6 0 0 1 12 0" stroke="#9aa1aa" stroke-width="1.7" stroke-linecap="round" stroke-linejoin="round"/><circle cx="5.5" cy="5" r="1.8" stroke="#9aa1aa" stroke-width="1.7" stroke-linecap="round" stroke-linejoin="round"/><circle cx="20.5" cy="5" r="1.8" stroke="#9aa1aa" stroke-width="1.7" stroke-linecap="round" stroke-linejoin="round"/><path d="M2 14 a4 4 0 0 1 3.5 -3.5 M24 14 a4 4 0 0 0 -3.5 -3.5" stroke="#9aa1aa" stroke-width="1.7" stroke-linecap="round" stroke-linejoin="round"/></svg>
<svg class="a" style="left:135px;top:603px;" width="26" height="24" viewBox="0 0 26 24" fill="none"><path d="M13 2.5 C 16 2.5 17.5 5.5 17 7.5 C 19.5 7 22.5 9 22.5 12 C 22.5 15 19.5 17 17 16.5 C 17.5 18.5 16 21.5 13 21.5 C 10 21.5 8.5 18.5 9 16.5 C 6.5 17 3.5 15 3.5 12 C 3.5 9 6.5 7 9 7.5 C 8.5 5.5 10 2.5 13 2.5 Z" stroke="#9aa1aa" stroke-width="1.7" stroke-linecap="round" stroke-linejoin="round"/><path d="M13 8.5 L14.2 10.8 L16.5 12 L14.2 13.2 L13 15.5 L11.8 13.2 L9.5 12 L11.8 10.8 Z" stroke="#9aa1aa" stroke-width="1.7" stroke-linecap="round" stroke-linejoin="round"/></svg>
<svg class="a" style="left:135px;top:672px;" width="26" height="24" viewBox="0 0 26 24" fill="none"><path d="M3.5 18.5 L9.5 12 L13.5 15.5 L20 9.5" stroke="#9aa1aa" stroke-width="1.7" stroke-linecap="round" stroke-linejoin="round"/><circle cx="3.5" cy="18.5" r="1" fill="#9aa1aa"/><circle cx="13.5" cy="15.5" r="1" fill="#9aa1aa"/><circle cx="20" cy="9.5" r="1" fill="#9aa1aa"/><path d="M4.5 8 h0.1 M14 3.5 v4 M12 5.5 h4" stroke="#9aa1aa" stroke-width="1.7" stroke-linecap="round" stroke-linejoin="round"/></svg>
<svg class="a" style="left:136px;top:730px;" width="24" height="24" viewBox="0 0 24 24" fill="none"><path d="M4 6.5 L7 9.5 L13 3" stroke="#9aa1aa" stroke-width="1.7" stroke-linecap="round" stroke-linejoin="round"/><path d="M4 14 H18 M4 19.5 H14" stroke="#9aa1aa" stroke-width="1.7" stroke-linecap="round" stroke-linejoin="round"/></svg>
<svg class="a" style="left:136px;top:788px;" width="24" height="24" viewBox="0 0 24 24" fill="none"><rect x="2.5" y="2" width="18" height="20" rx="2" stroke="#9aa1aa" stroke-width="1.7" stroke-linecap="round" stroke-linejoin="round"/><circle cx="11" cy="10.5" r="3.8" stroke="#9aa1aa" stroke-width="1.7" stroke-linecap="round" stroke-linejoin="round"/><path d="M13.8 13.3 L16.5 16" stroke="#9aa1aa" stroke-width="1.7" stroke-linecap="round" stroke-linejoin="round"/></svg>
<svg class="a" style="left:136px;top:845px;" width="24" height="26" viewBox="0 0 24 26" fill="none"><path d="M11 4 H5 a2 2 0 0 0 -2 2 V19 a2 2 0 0 0 2 2 H11 M15 4 H19 a2 2 0 0 1 2 2 V19 a2 2 0 0 1 -2 2 H15" stroke="#9aa1aa" stroke-width="1.7" stroke-linecap="round" stroke-linejoin="round"/><path d="M11 1.5 V23.5" stroke="#9aa1aa" stroke-width="1.7" stroke-linecap="round" stroke-linejoin="round"/></svg>
<svg class="a" style="left:135px;top:903px;" width="26" height="24" viewBox="0 0 26 24" fill="none"><path d="M9.5 7.8 H7.8 a4.2 4.2 0 0 0 0 8.4 H9.5 M16.5 7.8 H18.2 a4.2 4.2 0 0 1 0 8.4 H16.5 M9.3 12 H16.7" stroke="#9aa1aa" stroke-width="1.7" stroke-linecap="round" stroke-linejoin="round"/></svg>
<svg class="a" style="left:135px;top:959px;" width="26" height="26" viewBox="0 0 26 26" fill="none"><path d="M3 11.5 H7 V22.5 H3 Z" stroke="#9aa1aa" stroke-width="1.7" stroke-linecap="round" stroke-linejoin="round"/><path d="M7 12 L11 4 a2.5 2.5 0 0 1 3.5 2 V10.5 H20 a2 2 0 0 1 2 2.3 L20.5 20.5 a2.5 2.5 0 0 1 -2.5 2 H7" stroke="#9aa1aa" stroke-width="1.7" stroke-linecap="round" stroke-linejoin="round"/></svg>
<div class="a" style="left:401px;top:11.6px;width:34px;height:34px;background:#26303a;border:1.6px solid #46505e;border-radius:50%;box-sizing:border-box;"></div>
<svg class="a" style="left:411.5px;top:21.3px;" width="12" height="15" viewBox="0 0 12 15" fill="none"><path d="M8.3 2.3 L3.6 7.5 L8.3 12.7" stroke="#ffffff" stroke-width="2" stroke-linecap="round" stroke-linejoin="round"/></svg>

</body></html>
